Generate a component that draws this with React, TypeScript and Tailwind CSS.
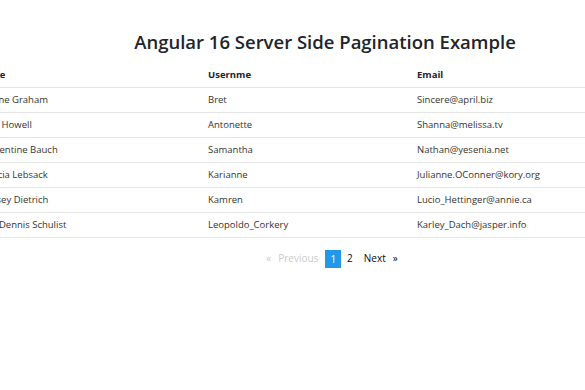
import React from 'react';

const users = [
  { name: 'Leanne Graham', username: 'Bret', email: 'Sincere@april.biz' },
  { name: 'Ervin Howell', username: 'Antonette', email: 'Shanna@melissa.tv' },
  { name: 'Clementine Bauch', username: 'Samantha', email: 'Nathan@yesenia.net' },
  { name: 'Patricia Lebsack', username: 'Karianne', email: 'Julianne.OConner@kory.org' },
  { name: 'Chelsey Dietrich', username: 'Kamren', email: 'Lucio_Hettinger@annie.ca' },
  { name: 'Mrs. Dennis Schulist', username: 'Leopoldo_Corkery', email: 'Karley_Dach@jasper.info' },
];

const App = () => {
  return (
    <div className="w-[585px] h-[390px] overflow-hidden bg-white text-[#212529]" style={{ fontFamily: '"Open Sans", "Noto Sans", sans-serif' }}>
      <div className="w-[738px] -ml-[44px] pt-[28px]">
        <h2 className="text-center text-[18.5px] font-semibold leading-[28px] text-[#212529]">
          Angular 16 Server Side Pagination Example
        </h2>
        <table className="mt-[6px] w-full text-[9.5px] border-collapse">
          <thead>
            <tr className="border-b border-[#e6e6e6]">
              <th className="w-[244px] text-left font-bold pl-[21px] h-[25px] pt-[2px]">Name</th>
              <th className="w-[209px] text-left font-bold pl-[8px] pt-[2px]">Usernme</th>
              <th className="text-left font-bold pl-[8px] pt-[2px]">Email</th>
            </tr>
          </thead>
          <tbody className="text-[#333]">
            {users.map((u) => (
              <tr key={u.email} className="border-b border-[#e6e6e6]">
                <td className="pl-[21px] h-[25px] pt-[1px]">{u.name}</td>
                <td className="pl-[8px] pt-[1px]">{u.username}</td>
                <td className="pl-[8px] pt-[1px]">{u.email}</td>
              </tr>
            ))}
          </tbody>
        </table>
        <div className="mt-[12px] flex justify-center items-center text-[10px] pl-[14px]">
          <span className="px-[5px] text-[#cacaca]">
            <span className="mr-[7px]">«</span>Previous
          </span>
          <span className="px-[5px] h-[18px] leading-[18px] bg-[#2199e8] text-[#fefefe] ml-[2px]">1</span>
          <span className="px-[5px] text-[#0a0a0a] ml-[1px]">2</span>
          <span className="px-[5px] text-[#0a0a0a] ml-[1px]">
            Next<span className="ml-[7px]">»</span>
          </span>
        </div>
      </div>
    </div>
  );
};

export default App;
